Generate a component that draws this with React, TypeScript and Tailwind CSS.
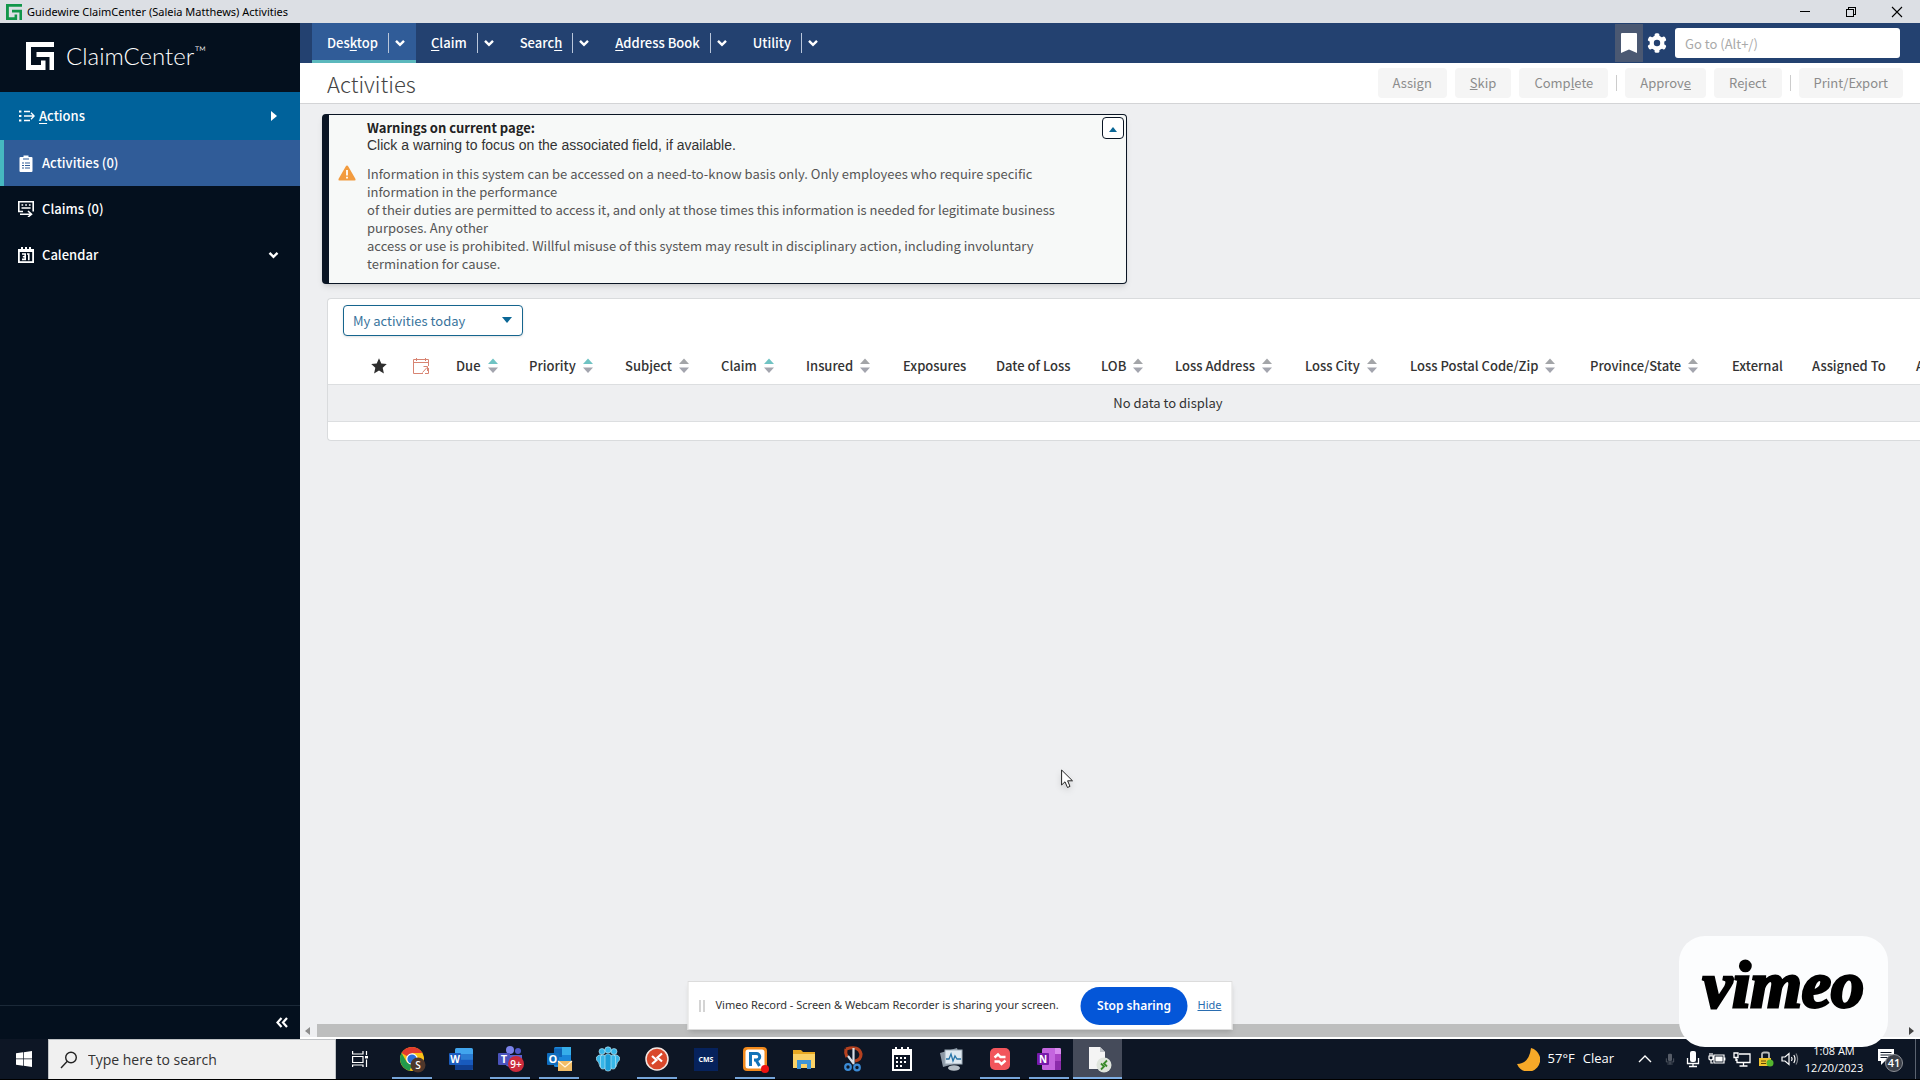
import React from "react";

const APP_FONT = "font-['Noto_Sans_CJK_SC',sans-serif]";
const WIN_FONT = "font-['Open_Sans',sans-serif]";
const CAPTION_FONT = "font-['Noto_Sans',sans-serif]";

function GuidewireMark({ className }: { className: string }) {
  return (
    <svg viewBox="0 0 28 28" className={className} fill="currentColor" aria-hidden="true">
      <path d="M0 0H28V5H5V23H15V18.500H19.500V28H0Z" />
      <path d="M10.500 10H28V28H23.500V15H10.500Z" />
    </svg>
  );
}

function Chevron({ className }: { className: string }) {
  return (
    <svg viewBox="0 0 10 8" className={className} fill="none" stroke="currentColor" strokeWidth="2.4" aria-hidden="true">
      <path d="M1 1.8 5 5.8 9 1.8" />
    </svg>
  );
}

function TitleBar() {
  return (
    <header className="flex h-[23px] shrink-0 items-center justify-between bg-[#dcdfe4] pl-[6px] text-black">
      <div className="flex items-center gap-[5px]">
        <GuidewireMark className="size-4 text-[#12964a]" />
        <span className={`${CAPTION_FONT} text-[11px] leading-4`}>Guidewire ClaimCenter (Saleia Matthews) Activities</span>
      </div>
      <div className="flex h-full items-center">
        <button aria-label="Minimize" className="flex w-[46px] justify-center">
          <svg viewBox="0 0 12 12" className="size-3" stroke="currentColor" fill="none" shapeRendering="crispEdges"><path d="M1 5.5H11" /></svg>
        </button>
        <button aria-label="Restore" className="flex w-[46px] justify-center">
          <svg viewBox="0 0 12 12" className="size-3" stroke="currentColor" fill="none" shapeRendering="crispEdges"><path d="M1.5 3.500H8.500V10.500H1.500ZM3.500 3V1.500H10.500V8.500H9" /></svg>
        </button>
        <button aria-label="Close" className="flex w-[46px] justify-center">
          <svg viewBox="0 0 12 12" className="size-3" stroke="currentColor" fill="none" strokeWidth="1.1"><path d="M1 1 11 11M11 1 1 11" /></svg>
        </button>
      </div>
    </header>
  );
}

function Sidebar() {
  return (
    <aside className={`${APP_FONT} flex w-[300px] shrink-0 flex-col bg-[#04101e] text-[13px] font-medium text-white`}>
      <div className="flex h-[69px] shrink-0 items-center gap-3 pb-[3px] pl-[26px]">
        <GuidewireMark className="size-7" />
        <div className="flex items-start font-['Lato',sans-serif] font-light">
          <span className="text-2xl leading-7">ClaimCenter</span>
          <span className="text-base leading-5">™</span>
        </div>
      </div>
      <nav className="flex flex-col">
        <button className="flex h-12 items-center bg-[#00629b] pr-[23px] pl-[19px]">
          <svg viewBox="0 0 16 12" className="h-3 w-4" fill="none" stroke="currentColor" strokeWidth="1.3" aria-hidden="true">
            <path d="M0 1.500H3M0 6H3M0 10.500H3" strokeWidth="2" strokeDasharray="2.400 9" />
            <path d="M5 1.500H11M5 6H15M5 10.500H11M12 2.800 15.200 6 12 9.200" />
          </svg>
          <span className="ml-1 flex-1 text-left"><u className="underline-offset-2">A</u>ctions</span>
          <svg viewBox="0 0 6 10" className="h-[10px] w-[6px]" fill="currentColor" aria-hidden="true"><path d="M0 0 6 5 0 10Z" /></svg>
        </button>
        <a href="#activities" className="flex h-[46px] items-center border-l-4 border-[#46b8c0] bg-[#305c98] pl-[14px]">
          <svg viewBox="0 0 16 17" className="mr-2 h-[17px] w-4" aria-hidden="true">
            <path fill="currentColor" d="M2.500 2H5.500V0.500H10.500V2H13.500A1 1 0 0 1 14.500 3V16A1 1 0 0 1 13.500 17H2.500A1 1 0 0 1 1.500 16V3A1 1 0 0 1 2.500 2Z" />
            <path stroke="#305c98" strokeWidth="1.200" d="M5 4H11M4 8H6M7 8H12M4 10.500H6M7 10.500H12M4 13H6M7 13H12" />
          </svg>
          Activities (0)
        </a>
        <a href="#claims" className="flex h-[46px] items-center pl-[18px]">
          <svg viewBox="0 0 16 16" className="mr-2 size-4" fill="none" stroke="currentColor" strokeWidth="1.600" aria-hidden="true">
            <path d="M5 10.500H0.800V0.800H15.200V10.500" />
            <path d="M3.500 4H5.200M7.200 4H8.900M10.900 4H12.600M3.500 7H12.600M2 13.200H12.500M10 10 13.500 13.200 10 16" />
          </svg>
          Claims (0)
        </a>
        <button className="flex h-[46px] items-center pr-[21px] pl-[18px]">
          <svg viewBox="0 0 16 16" className="mr-2 size-4" aria-hidden="true">
            <path fill="currentColor" d="M0 2H3V0H5V2H7V0H9V2H11V0H13V2H16V16H0Z" />
            <path fill="#04101e" d="M1.800 5H14.200V14.200H1.800Z" />
            <path fill="none" stroke="currentColor" strokeWidth="1.600" d="M4 7H7.200V12.400H4M4.800 9.700H7M9 7H10.800V13.200" />
          </svg>
          <span className="flex-1 text-left">Calendar</span>
          <Chevron className="h-2 w-[11px]" />
        </button>
      </nav>
      <div className="mt-auto flex h-[34px] items-center justify-end border-t border-[#1b2938] pr-3">
        <button aria-label="Collapse sidebar">
          <svg viewBox="0 0 12 11" className="h-[11px] w-3" fill="none" stroke="currentColor" strokeWidth="2.200" aria-hidden="true"><path d="M5.500 1 1.500 5.500 5.500 10M11 1 7 5.500 11 10" /></svg>
        </button>
      </div>
    </aside>
  );
}

type NavItem = { pre: string; key: string; post: string; active?: boolean };
const NAV: NavItem[] = [
  { pre: "Des", key: "k", post: "top", active: true },
  { pre: "", key: "C", post: "laim" },
  { pre: "Searc", key: "h", post: "" },
  { pre: "", key: "A", post: "ddress Book" },
  { pre: "Utility", key: "", post: "" },
];

function TopNav() {
  return (
    <div className={`${APP_FONT} flex h-10 shrink-0 items-stretch bg-[#234170] pl-3 text-white`}>
      <nav className="flex text-[13px] font-medium">
        {NAV.map((n) => (
          <div
            key={n.pre + n.post}
            className={n.active ? "flex items-center border-b-[3px] border-[#5bb8bd] bg-[#305c98] pt-[3px] pl-[15px]" : "flex items-center pl-[15px]"}
          >
            <button className="pr-[10px]">
              {n.pre}
              <u className="underline-offset-2">{n.key}</u>
              {n.post}
            </button>
            <button aria-label={`${n.pre}${n.key}${n.post} menu`} className="flex h-5 items-center border-l border-[#b9c6da] pr-[11px] pl-[6px]">
              <Chevron className="h-2 w-[10px]" />
            </button>
          </div>
        ))}
      </nav>
      <div className="ml-auto flex items-center pr-5">
        <button aria-label="Bookmark" className="flex h-[38px] w-7 items-center justify-center bg-[#4a5872]">
          <svg viewBox="0 0 16 20" className="h-5 w-4" fill="currentColor" aria-hidden="true"><path d="M1 0H15A1 1 0 0 1 16 1V20L8 16.500 0 20V1A1 1 0 0 1 1 0Z" /></svg>
        </button>
        <button aria-label="Settings" className="mr-2 ml-1 flex size-5 items-center justify-center">
          <svg viewBox="0 0 20 20" className="size-5" aria-hidden="true">
            <g fill="currentColor">
              <circle cx="10" cy="10" r="7.400" />
              {[0, 60, 120].map((a) => (
                <rect key={a} x="7.600" y="0.200" width="4.800" height="19.600" rx="1.500" transform={`rotate(${a} 10 10)`} />
              ))}
            </g>
            <circle cx="10" cy="10" r="3.200" fill="#234170" />
          </svg>
        </button>
        <input aria-label="Go to" placeholder="Go to (Alt+/)" className="h-[30px] w-[225px] rounded-[3px] bg-white px-[10px] text-[13px] text-gray-700 outline-none placeholder:text-[#a9a9a9]" />
      </div>
    </div>
  );
}

function ActionButton({ children }: { children: React.ReactNode }) {
  return <button className="h-[30px] rounded-sm bg-[#f5f5f5] px-[15px] text-[13px] text-[#8c8c8c]">{children}</button>;
}

function PageHeader() {
  return (
    <div className={`${APP_FONT} flex h-[41px] shrink-0 items-center justify-between border-b border-[#d3d4d6] bg-white pr-[17px] pb-px pl-[27px]`}>
      <h1 className="text-[22px] leading-8 font-light text-[#444]">Activities</h1>
      <div className="flex items-center gap-2">
        <ActionButton>Assign</ActionButton>
        <ActionButton><u>S</u>kip</ActionButton>
        <ActionButton>Comp<u>l</u>ete</ActionButton>
        <span className="h-4 w-px bg-[#ccc]" />
        <ActionButton>Approv<u>e</u></ActionButton>
        <ActionButton>Reject</ActionButton>
        <span className="h-4 w-px bg-[#ccc]" />
        <ActionButton>Print/Export</ActionButton>
      </div>
    </div>
  );
}

function WarningBox() {
  return (
    <section className="flex w-[805px] rounded-[4px] border border-l-[7px] border-[#0a1524] bg-[#f7f9f8] pt-1 pr-[2px] pb-[10px] shadow-md">
      <div className="w-[38px] shrink-0 pt-[46px] pl-[9px]">
        <svg viewBox="0 0 18 16" className="h-4 w-[18px]" aria-hidden="true">
          <path fill="#f29b3e" d="M9 0.500Q9.800 0.500 10.300 1.400L17.500 14Q18 15.500 16.500 15.500H1.500Q0 15.500 0.500 14L7.700 1.400Q8.200 0.500 9 0.500Z" />
          <path stroke="#fff" strokeWidth="1.800" d="M9 5V10.500M9 11.800V13.600" />
        </svg>
      </div>
      <div className="flex-1">
        <p className={`${APP_FONT} text-[13px] leading-[18px] font-bold text-[#222]`}>Warnings on current page:</p>
        <p className="font-['Liberation_Sans',sans-serif] text-sm leading-4 text-[#333]">Click a warning to focus on the associated field, if available.</p>
        <p className={`${APP_FONT} mt-3 text-[13px] leading-[18px] text-[#555]`}>
          Information in this system can be accessed on a need-to-know basis only. Only employees who require specific
          <br />
          information in the performance
          <br />
          of their duties are permitted to access it, and only at those times this information is needed for legitimate business
          <br />
          purposes. Any other
          <br />
          access or use is prohibited. Willful misuse of this system may result in disciplinary action, including involuntary
          <br />
          termination for cause.
        </p>
      </div>
      <button aria-label="Collapse warnings" className="-mt-[2px] flex size-[22px] shrink-0 items-center justify-center rounded-[4px] border border-[#0a1524] bg-white">
        <svg viewBox="0 0 8 5" className="mt-[3px] h-[5px] w-2" fill="#0b6796" aria-hidden="true"><path d="M4 0 8 5H0Z" /></svg>
      </button>
    </section>
  );
}

type Column = { label: string; width: string; sort?: "on" | "off" };
const COLUMNS: Column[] = [
  { label: "Due", width: "w-[73px]", sort: "on" },
  { label: "Priority", width: "w-[96px]", sort: "on" },
  { label: "Subject", width: "w-[96px]", sort: "off" },
  { label: "Claim", width: "w-[85px]", sort: "on" },
  { label: "Insured", width: "w-[97px]", sort: "off" },
  { label: "Exposures", width: "w-[93px]" },
  { label: "Date of Loss", width: "w-[105px]" },
  { label: "LOB", width: "w-[74px]", sort: "off" },
  { label: "Loss Address", width: "w-[130px]", sort: "off" },
  { label: "Loss City", width: "w-[105px]", sort: "off" },
  { label: "Loss Postal Code/Zip", width: "w-[180px]", sort: "off" },
  { label: "Province/State", width: "w-[142px]", sort: "off" },
  { label: "External", width: "w-[80px]" },
  { label: "Assigned To", width: "w-[104px]" },
  { label: "A", width: "w-[106px]" },
];

function SortIcon({ on }: { on: boolean }) {
  return (
    <svg viewBox="0 0 10 16" className="h-4 w-[10px] shrink-0" aria-hidden="true">
      <path d="M5 0.500 10 6H0Z" fill={on ? "#6fc3c3" : "#a3a5a8"} />
      <path d="M0 9.500H10L5 15Z" fill="#a3a5ae" />
    </svg>
  );
}

function ActivitiesPanel() {
  return (
    <section className={`${APP_FONT} mt-[14px] ml-[5px] overflow-hidden rounded-l-[4px] border border-r-0 border-[#d9dbdd] bg-white text-[13px] text-[#333]`}>
      <div className="relative mt-[6px] ml-[15px] w-[180px]">
        <select aria-label="Activity filter" className="h-[31px] w-full appearance-none rounded-[4px] border border-[#16658e] bg-white px-[9px] text-[13px] text-[#39749c] shadow-sm">
          <option>My activities today</option>
        </select>
        <svg viewBox="0 0 10 6" className="pointer-events-none absolute top-[12px] right-[11px] h-[6px] w-[10px]" fill="#0b6796" aria-hidden="true"><path d="M0 0H10L5 6Z" /></svg>
      </div>
      <table className="mt-3 mb-[18px] w-[1680px] table-fixed border-collapse">
        <thead>
          <tr className="h-9">
            <th className="w-[30px]" />
            <th className="w-[41px]">
              <svg viewBox="0 0 16 16" className="mx-auto size-4" role="img" aria-label="Flagged"><path fill="#2e2e2e" d="M8 0.300 10.300 5.500 15.800 6.100 11.700 9.800 12.900 15.500 8 12.600 3.100 15.500 4.300 9.800 0.200 6.100 5.700 5.500Z" /></svg>
            </th>
            <th className="w-[43px]">
              <svg viewBox="0 0 16 16" className="mx-auto size-4" fill="none" stroke="#d88472" role="img" aria-label="Escalated">
                <path d="M10 15.500H0.500V1.500H15.500V8M0.500 4.500H15.500M3.500 0V3M12.500 0V3" />
                <path d="M9.500 14.500 14 9.500M10.500 8.500H14.500V13M15.500 10V15.500H12" />
              </svg>
            </th>
            {COLUMNS.map((c) => (
              <th key={c.label} className={`${c.width} pl-[14px] text-left font-medium whitespace-nowrap`}>
                {c.sort ? (
                  <button className="flex items-center gap-[7px]">
                    {c.label}
                    <SortIcon on={c.sort === "on"} />
                  </button>
                ) : (
                  c.label
                )}
              </th>
            ))}
          </tr>
        </thead>
        <tbody>
          <tr className="h-[37px] border-y border-[#dcdee0] bg-[#eeeff1]">
            <td colSpan={18} className="text-center">No data to display</td>
          </tr>
        </tbody>
      </table>
    </section>
  );
}

function HorizontalScrollbar() {
  return (
    <div className="mt-auto flex h-[15px] shrink-0 items-center border-b-2 border-white pr-[6px] pl-[5px]">
      <svg viewBox="0 0 5 8" className="h-2 w-[5px]" fill="#8d8d8d" aria-hidden="true"><path d="M5 0V8L0 4Z" /></svg>
      <div className="ml-[7px] h-[13px] flex-1 bg-[#bdbebe]" />
      <div className="h-[13px] w-[120px]" />
      <svg viewBox="0 0 5 8" className="h-2 w-[5px]" fill="#444" aria-hidden="true"><path d="M0 0V8L5 4Z" /></svg>
    </div>
  );
}

function Badge({ x, y, r, fill, text, size }: { x: number; y: number; r: number; fill: string; text: string; size: number }) {
  return (
    <g>
      <circle cx={x} cy={y} r={r} fill={fill} />
      <text x={x} y={y + size * 0.36} fontSize={size} fill="#fff" textAnchor="middle" fontFamily="Open Sans" fontWeight="600">{text}</text>
    </g>
  );
}

type TaskApp = { name: string; open?: boolean; active?: boolean; icon: React.ReactNode };
const letter = (t: string, x: number, y: number, size: number, fill = "#fff") => (
  <text x={x} y={y} fontSize={size} fill={fill} textAnchor="middle" fontFamily="Open Sans" fontWeight="700">{t}</text>
);

const APPS: TaskApp[] = [
  {
    name: "Chrome", open: true,
    icon: (
      <>
        <circle cx="14" cy="14" r="12" fill="#fbc116" />
        <path d="M14 14 3.600 8A12 12 0 0 1 24.400 8H14Z" fill="#e33b2e" />
        <path d="M3.600 8 9 17.500 14 20 11.500 25.700A12 12 0 0 1 3.600 8Z" fill="#229a4b" />
        <circle cx="14" cy="14" r="5.800" fill="#fff" />
        <circle cx="14" cy="14" r="4.600" fill="#2a6fdb" />
        <Badge x={20} y={20} r={7.500} fill="#4f372b" text="S" size={10} />
      </>
    ),
  },
  {
    name: "Word",
    icon: (
      <>
        <rect x="8" y="3" width="18" height="22" rx="1.500" fill="#41a5ee" />
        <rect x="8" y="9" width="18" height="5.500" fill="#2b7cd3" />
        <rect x="8" y="14.500" width="18" height="5.500" fill="#185abd" />
        <path d="M8 20H26V23.500A1.500 1.500 0 0 1 24.500 25H8Z" fill="#103f91" />
        <rect x="2" y="8" width="12" height="12" rx="1" fill="#1b5cbe" />
        {letter("W", 8, 17.500, 10)}
      </>
    ),
  },
  {
    name: "Teams", open: true,
    icon: (
      <>
        <circle cx="14" cy="5" r="4" fill="#7b83eb" />
        <circle cx="22" cy="6" r="3" fill="#5059c9" />
        <path d="M8 10H26V17A6 6 0 0 1 20 22H14A7 7 0 0 1 8 17Z" fill="#5b62cf" />
        <rect x="2" y="8" width="12" height="12" rx="1" fill="#4a53bc" />
        {letter("T", 8, 17.500, 11)}
        <Badge x={20} y={19} r={8} fill="#cc2b3c" text="9+" size={10} />
      </>
    ),
  },
  {
    name: "Outlook", open: true,
    icon: (
      <>
        <rect x="9" y="2" width="17" height="20" rx="1.500" fill="#1a86d9" />
        <path d="M9 3.500H17V12H9Z" fill="#0f64b5" />
        <path d="M17 2H26V10H17Z" fill="#36aeea" />
        <rect x="2" y="8" width="12" height="12" rx="1" fill="#0f6cbd" />
        {letter("O", 8, 17.500, 11)}
        <rect x="13" y="16" width="14" height="10" fill="#f2bd67" />
        <path d="M13 16 20 22 27 16" fill="none" stroke="#fff6df" strokeWidth="1.200" />
      </>
    ),
  },
  {
    name: "People",
    icon: (
      <g fill="#37b6e8" stroke="#c8ecf8" strokeWidth="0.600">
        <circle cx="8" cy="6.500" r="3" />
        <circle cx="20" cy="6.500" r="3" />
        <path d="M2.500 12Q5 9 8 10V22H6Q5 17 2.500 15ZM25.500 12Q23 9 20 10V22H22Q23 17 25.500 15Z" />
        <rect x="6.500" y="10" width="5" height="14" rx="2" />
        <rect x="16.500" y="10" width="5" height="14" rx="2" />
        <rect x="11" y="9" width="6" height="17" rx="2.500" fill="#1d9fd8" />
        <circle cx="14" cy="5" r="3.200" />
      </g>
    ),
  },
  {
    name: "Remote Desktop Manager", open: true,
    icon: (
      <>
        <circle cx="14" cy="14" r="11" fill="#d9482b" stroke="#f4e7e2" strokeWidth="1.500" />
        <path d="M9 11 13.500 15 9 19M19 8.500 14.500 12.500 19 16.500" fill="none" stroke="#fff" strokeWidth="2.200" />
      </>
    ),
  },
  {
    name: "CMS",
    icon: (
      <>
        <rect x="2" y="3" width="24" height="23" fill="#06225c" />
        {letter("CMS", 14, 17, 7)}
      </>
    ),
  },
  {
    name: "RingCentral", open: true,
    icon: (
      <>
        <rect x="2" y="2" width="24" height="24" rx="4" fill="#f28a1c" />
        <rect x="4.500" y="4.500" width="19" height="19" rx="2.500" fill="#fff" />
        <path d="M9.500 21V8.500H15.500A3.200 3.200 0 0 1 15.500 15H13M15 15 18.500 21" fill="none" stroke="#1273b8" strokeWidth="3" />
        <circle cx="24" cy="24" r="4" fill="#ee1111" />
      </>
    ),
  },
  {
    name: "File Explorer",
    icon: (
      <>
        <path d="M3 5H11L13 7H25V23H3Z" fill="#e8a923" />
        <path d="M3 9H25V23H3Z" fill="#fbd266" />
        <path d="M7 24V15H21V24H17V19H11V24Z" fill="#3d94d6" />
      </>
    ),
  },
  {
    name: "Snipping Tool",
    icon: (
      <>
        <path d="M7 4Q20 0 22 9Q22 15 16 16M7 4Q6 8 8 12" fill="none" stroke="#b5411f" strokeWidth="3.200" />
        <path d="M14.500 3V18M9 11 15 19" stroke="#d7dee6" strokeWidth="2.200" />
        <circle cx="9" cy="22" r="2.800" fill="none" stroke="#3b8bd6" strokeWidth="2.200" />
        <circle cx="18" cy="22.500" r="2.800" fill="none" stroke="#3b8bd6" strokeWidth="2.200" />
      </>
    ),
  },
  {
    name: "Calendar",
    icon: (
      <>
        <path d="M4 4H7V2H9V4H13V2H15V4H19V2H21V4H24V26H4Z" fill="#fff" />
        <path d="M6 10H22V24H6Z" fill="#0d1625" />
        <path d="M8 13H20M8 17H20M8 21H16" stroke="#fff" strokeWidth="2" strokeDasharray="2 2" />
      </>
    ),
  },
  {
    name: "Performance Monitor",
    icon: (
      <>
        <path d="M3 8 20 3 24 17 6 22Z" fill="#8d99a6" />
        <rect x="8" y="5" width="17" height="14" fill="#dfe9f1" stroke="#9eabb7" />
        <path d="M9 14H12L14 9 16 16 18 11 20 14H24" fill="none" stroke="#2875a8" strokeWidth="1.300" />
        <ellipse cx="17" cy="23" rx="6" ry="2.800" fill="#b5bec6" />
      </>
    ),
  },
  {
    name: "Splashtop", open: true,
    icon: (
      <>
        <rect x="4" y="3" width="20" height="22" rx="5" fill="#f2555c" />
        <path d="M8.500 12.500 12 9.500 14.500 12H19.500M8.500 16.500H13L15.500 19 19.500 15.500" fill="none" stroke="#fff" strokeWidth="2.400" />
      </>
    ),
  },
  {
    name: "OneNote", open: true,
    icon: (
      <>
        <rect x="7" y="3" width="19" height="22" rx="1.500" fill="#c465df" />
        <path d="M20 3H24.500A1.500 1.500 0 0 1 26 4.500V9H20Z" fill="#d98bee" />
        <path d="M20 9H26V16H20Z" fill="#a944c4" />
        <path d="M20 16H26V23.500A1.500 1.500 0 0 1 24.500 25H20Z" fill="#8b2bab" />
        <rect x="2" y="8" width="12" height="12" rx="1" fill="#7719aa" />
        {letter("N", 8, 17.500, 10)}
      </>
    ),
  },
  {
    name: "Remote session", open: true, active: true,
    icon: (
      <>
        <path d="M5 2H16L21 7V24H5Z" fill="#f4f4f4" />
        <path d="M16 2V7H21Z" fill="#bfc3c7" />
        <circle cx="20" cy="20" r="7.500" fill="#dfe5dc" />
        <path d="M17 18.500 20 21.500 17 24.500M23 15.500 20 18.500 23 21.500" fill="none" stroke="#3a8b2b" strokeWidth="1.800" />
      </>
    ),
  },
];

function TaskbarApp({ app }: { app: TaskApp }) {
  return (
    <button aria-label={app.name} className={app.active ? "flex w-[49px] flex-col items-center bg-[#454b5a]" : "flex w-[49px] flex-col items-center"}>
      <svg viewBox="0 0 28 28" className="mt-[6px] size-7" aria-hidden="true">{app.icon}</svg>
      <span className={app.active ? "mt-auto h-[2px] w-full bg-[#7fb0e6]" : app.open ? "mt-auto h-[2px] w-10 bg-[#76a5da]" : "mt-auto h-[2px] w-10"} />
    </button>
  );
}

function Tray() {
  return (
    <div className="ml-auto flex items-center text-white">
      <svg viewBox="0 0 24 24" className="mr-2 size-6" aria-hidden="true"><path fill="#f7a928" d="M15 1A12 12 0 1 1 1 17Q13 17 15 1Z" /></svg>
      <span className="text-[13px]">57°F</span>
      <span className="ml-2 text-[13px]">Clear</span>
      <button aria-label="Show hidden icons" className="ml-6">
        <svg viewBox="0 0 14 14" className="size-[14px]" fill="none" stroke="currentColor" strokeWidth="1.400"><path d="M1 10 7 4 13 10" /></svg>
      </button>
      <div className="ml-[10px] flex items-center gap-[7px]">
        <svg viewBox="0 0 16 18" className="h-3 w-4 opacity-30" fill="currentColor" aria-hidden="true">
          <rect x="5" y="1" width="6" height="11" rx="2" />
          <path fill="none" stroke="currentColor" strokeWidth="1.300" d="M2.500 8V13.500H13.500V8M8 13V17M4 16.500H12" />
        </svg>
        <svg viewBox="0 0 16 18" className="h-[18px] w-4" fill="currentColor" aria-hidden="true">
          <rect x="5" y="1" width="6" height="11" rx="2" />
          <path fill="none" stroke="currentColor" strokeWidth="1.300" d="M2.500 8V13.500H13.500V8M8 13V17M4 16.500H12" />
        </svg>
        <svg viewBox="0 0 18 16" className="h-4 w-[18px]" fill="none" stroke="currentColor" strokeWidth="1.200" aria-hidden="true">
          <path d="M6 4H16V12H6ZM16.800 6.500V9.500M0.500 5H5V8Q3 10 1 8V5M2 5V2M4 5V2M3 9V12H5" />
          <path fill="currentColor" d="M8 6H14V10H8Z" />
        </svg>
        <svg viewBox="0 0 18 16" className="h-4 w-[18px]" fill="none" stroke="currentColor" strokeWidth="1.300" aria-hidden="true">
          <path d="M6 3H17V11.500H4V8M10.500 11.500V14.500M6.500 15H14.500M1 2H5V6.500H1ZM3 6.500V10" />
        </svg>
        <svg viewBox="0 0 16 16" className="size-4" aria-hidden="true">
          <path d="M4 8V3Q4 1.500 6 1.500H9Q11 1.500 11 3V8" fill="none" stroke="#b9b9b9" strokeWidth="1.800" />
          <rect x="1" y="7" width="12" height="8" fill="#f0c22d" />
          <path d="M3 10H8M3 12.500H8" stroke="#5a4508" />
          <circle cx="12" cy="12" r="3.500" fill="#55b52e" />
        </svg>
        <svg viewBox="0 0 18 16" className="h-4 w-[18px]" fill="none" stroke="currentColor" strokeWidth="1.200" aria-hidden="true">
          <path d="M1 6H4L8 2.500V13.500L4 10H1ZM10.500 6Q11.800 8 10.500 10M12.800 4Q15.200 8 12.800 12" />
          <path d="M15 2.500Q18.200 8 15 13.500" opacity="0.450" />
        </svg>
      </div>
      <div className="ml-1 flex w-[62px] flex-col items-center text-[11px] leading-[17px] whitespace-nowrap">
        <span>1:08 AM</span>
        <span>12/20/2023</span>
      </div>
      <button aria-label="Notifications, 41 new" className="ml-3 flex">
        <svg viewBox="0 0 28 28" className="size-7">
          <path fill="#fff" d="M1 4H17V16H8L4 20V16H1Z" />
          <path stroke="#0d1625" d="M3.500 7.500H14.500M3.500 10H14.500M3.500 12.500H11" />
          <circle cx="17" cy="18" r="8.500" fill="#3b3f48" stroke="#8d9097" />
          <text x="17" y="22" textAnchor="middle" fontSize="11" fontWeight="600" fill="#fff" fontFamily="Open Sans">41</text>
        </svg>
      </button>
      <span className="ml-[10px] h-10 w-px bg-[#5b6370]" />
      <span className="w-1" />
    </div>
  );
}

function Taskbar() {
  return (
    <footer className={`${WIN_FONT} flex h-[41px] shrink-0 items-stretch border-b border-black bg-[#0d1625]`}>
      <button aria-label="Start" className="flex w-12 items-center pl-4">
        <svg viewBox="0 0 16 16" className="size-4" fill="#fff"><path d="M0 2.300 7 1.300V7.600H0ZM7.700 1.200 16 0V7.600H7.700ZM0 8.300H7V14.700L0 13.700ZM7.700 8.300H16V16L7.700 14.800Z" /></svg>
      </button>
      <label className="flex w-[288px] items-center border border-b-0 border-[#bfc2c5] bg-[#f0f0f0] pl-[11px]">
        <svg viewBox="0 0 18 18" className="size-[18px]" fill="none" stroke="#222" strokeWidth="1.400" aria-hidden="true"><circle cx="11" cy="6.500" r="5.300" /><path d="M7.300 10.300 1 17" /></svg>
        <input aria-label="Search" placeholder="Type here to search" className="ml-[10px] w-56 bg-transparent text-sm text-[#333] outline-none placeholder:text-[#333]" />
      </label>
      <button aria-label="Task view" className="flex w-[51px] items-center pl-4">
        <svg viewBox="0 0 16 16" className="size-4" fill="none" stroke="#fff" strokeWidth="1.200"><path d="M0.600 0V3H11V0M0.600 5.500H11V11.500H0.600ZM0.600 16V14H11V16M14.500 0V4M14.500 8.500V16" /><path d="M13 6.200H16" strokeWidth="2.500" /></svg>
      </button>
      {APPS.map((a) => (
        <TaskbarApp key={a.name} app={a} />
      ))}
      <Tray />
    </footer>
  );
}

function SharingBar() {
  return (
    <div className={`${CAPTION_FONT} absolute bottom-[50px] left-1/2 flex h-[49px] w-[545px] -translate-x-1/2 items-center border border-[#dcdcdc] bg-white pl-[11px] text-[11px] text-[#333] shadow-md`}>
      <span className="mr-[11px] h-3 w-[5px] border-x border-[#aaa]" />
      <span className="w-[365px] whitespace-nowrap">Vimeo Record - Screen &amp; Webcam Recorder is sharing your screen.</span>
      <button className="h-[38px] w-[107px] rounded-full bg-[#0456d8] text-xs font-semibold text-white">Stop sharing</button>
      <a href="#hide" className="ml-[10px] text-[#2a6db0] underline">Hide</a>
    </div>
  );
}

function VimeoBadge() {
  return (
    <div className="absolute right-8 bottom-[33px] flex h-[111px] w-[209px] items-center justify-center rounded-[26px] bg-[#fcfdfe]">
      <span className="pb-[14px] font-['Liberation_Serif',serif] text-[66px] leading-none font-bold text-black italic [-webkit-text-stroke:3px_#000]">vimeo</span>
    </div>
  );
}

export default function App() {
  return (
    <div className="relative flex h-screen flex-col overflow-hidden bg-[#eeeff1]">
      <TitleBar />
      <div className="flex min-h-0 flex-1">
        <Sidebar />
        <main className="flex min-w-0 flex-1 flex-col">
          <TopNav />
          <PageHeader />
          <div className="pt-[10px] pl-[22px]">
            <WarningBox />
            <ActivitiesPanel />
          </div>
          <HorizontalScrollbar />
        </main>
      </div>
      <Taskbar />
      <SharingBar />
      <VimeoBadge />
      <svg viewBox="0 0 14 20" className="pointer-events-none absolute top-[769px] left-[1061px] h-5 w-[14px] drop-shadow-md" aria-hidden="true">
        <path d="M0.600 1V16L4 12.800 6.500 18.500 9 17.400 6.600 11.800H11.500Z" fill="#fff" stroke="#222" strokeWidth="1" />
      </svg>
    </div>
  );
}
